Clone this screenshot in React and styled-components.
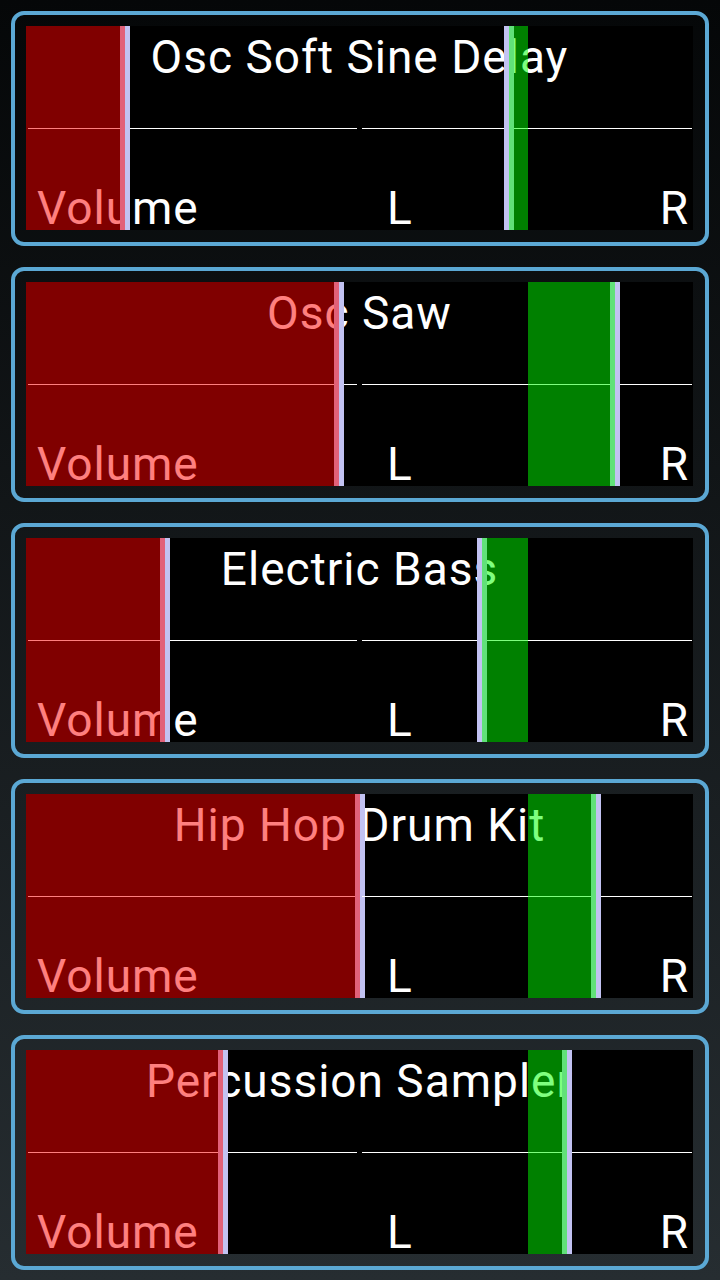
import React from 'react'
import styled, { createGlobalStyle } from 'styled-components'

const VOL_W = 332
const PAN_W = 331
const THUMB = 10

const channels = [
  { name: 'Osc Soft Sine Delay', vol: 99, pan: 147 },
  { name: 'Osc Saw', vol: 313, pan: 253 },
  { name: 'Electric Bass', vol: 139, pan: 120 },
  { name: 'Hip Hop Drum Kit', vol: 334, pan: 234 },
  { name: 'Percussion Sampler', vol: 197, pan: 205 },
]

const GlobalStyle = createGlobalStyle`
  html, body {
    margin: 0;
    padding: 0;
  }
  body {
    min-height: 1280px;
    background: linear-gradient(#050708, #262d31);
    font-family: Roboto, "Liberation Sans", sans-serif;
    color: #fff;
  }
`

const List = styled.div`
  display: flex;
  flex-direction: column;
  gap: 21px;
  padding: 11px 0 0 11px;
`

const Card = styled.div`
  box-sizing: border-box;
  width: 698px;
  padding: 11px 12px 12px 11px;
  border: 4px solid #5ba8d4;
  border-radius: 13px;
`

const Stage = styled.div`
  position: relative;
  height: 204px;
  background: #000;
  display: grid;
  grid-template-columns: ${VOL_W}px ${PAN_W}px;
  column-gap: 4px;
`

const Labels = styled.div`
  position: absolute;
  inset: 0;
  display: flex;
  flex-direction: column;
  justify-content: space-between;
  padding-top: 8px;
  font-size: 46px;
  letter-spacing: 1px;
  line-height: 46px;
  white-space: nowrap;
`

const Title = styled.div`
  text-align: center;
`

const Footer = styled.div`
  display: grid;
  grid-template-columns: ${VOL_W}px ${PAN_W}px;
  column-gap: 4px;
  margin-bottom: -1px;
`

const VolLabel = styled.span`
  padding-left: 11px;
`

const PanLabels = styled.div`
  display: flex;
  justify-content: space-between;
  padding: 0 4px 0 25px;
`

const Slider = styled.div`
  position: relative;
`

const Track = styled.div`
  position: absolute;
  left: ${p => p.$inset}px;
  right: 1px;
  top: 102px;
  height: 1px;
  background: #fff;
`

const Thumb = styled.div`
  position: absolute;
  top: 0;
  bottom: 0;
  width: ${THUMB}px;
  background: #c2c2f2;
`

const Fill = styled.div`
  position: absolute;
  top: 0;
  bottom: 0;
  background: ${p => p.$color};
`

function Channel({ name, vol, pan }) {
  const center = PAN_W / 2
  return (
    <Card>
      <Stage>
        <Labels>
          <Title>{name}</Title>
          <Footer>
            <VolLabel>Volume</VolLabel>
            <PanLabels>
              <span>L</span>
              <span>R</span>
            </PanLabels>
          </Footer>
        </Labels>
        <Slider>
          <Track $inset={2} />
          <Thumb style={{ left: vol - THUMB / 2 }} />
          <Fill $color="rgba(255, 0, 0, 0.5)" style={{ left: 0, width: vol }} />
        </Slider>
        <Slider>
          <Track $inset={0} />
          <Thumb style={{ left: pan - THUMB / 2 }} />
          <Fill
            $color="rgba(0, 255, 0, 0.5)"
            style={{ left: Math.min(center, pan), width: Math.abs(pan - center) }}
          />
        </Slider>
      </Stage>
    </Card>
  )
}

export default function App() {
  return (
    <>
      <GlobalStyle />
      <List>
        {channels.map(c => (
          <Channel key={c.name} {...c} />
        ))}
      </List>
    </>
  )
}
